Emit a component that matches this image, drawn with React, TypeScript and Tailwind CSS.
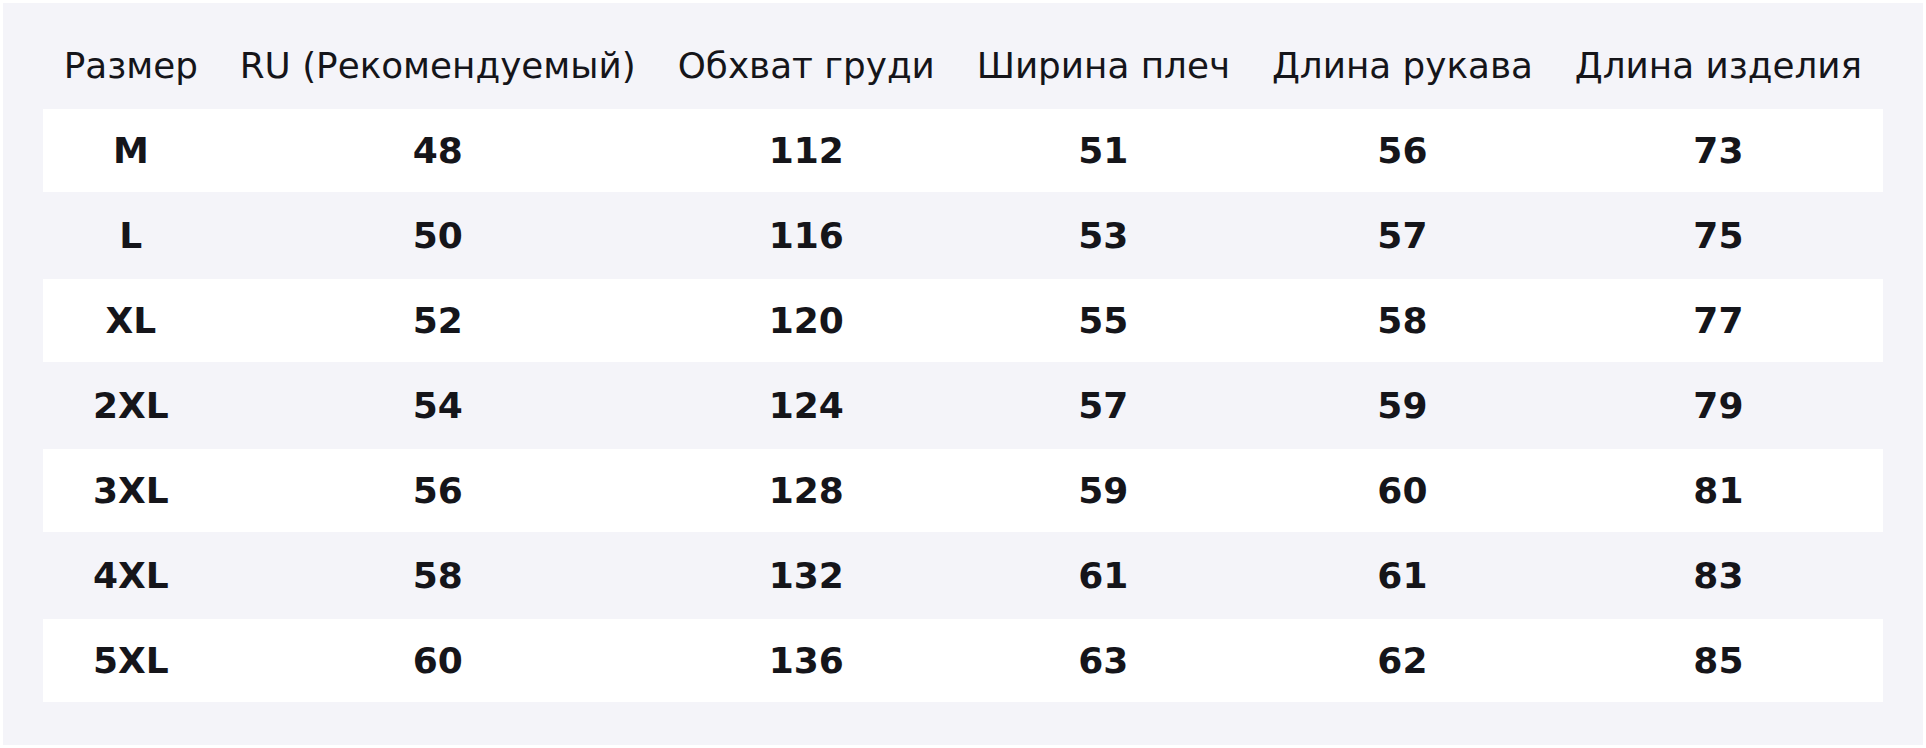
import React from "react";

const headers = [
  "Размер",
  "RU (Рекомендуемый)",
  "Обхват груди",
  "Ширина плеч",
  "Длина рукава",
  "Длина изделия",
];

const rows: string[][] = [
  ["M", "48", "112", "51", "56", "73"],
  ["L", "50", "116", "53", "57", "75"],
  ["XL", "52", "120", "55", "58", "77"],
  ["2XL", "54", "124", "57", "59", "79"],
  ["3XL", "56", "128", "59", "60", "81"],
  ["4XL", "58", "132", "61", "61", "83"],
  ["5XL", "60", "136", "63", "62", "85"],
];

export default function App() {
  return (
    <div className="bg-white p-[3px] w-[1926px] h-[748px] font-['DejaVu_Sans',sans-serif] text-[#15151a]">
      <div className="bg-[#f4f4f9] h-full px-10 pt-10">
        <table className="w-full border-separate border-spacing-x-0 border-spacing-y-[2px]">
          <thead>
            <tr>
              {headers.map((h) => (
                <th
                  key={h}
                  className="text-[35.75px] font-normal leading-[normal] px-[20.5px] pt-0 pb-[21px] align-top whitespace-nowrap text-center"
                >
                  {h}
                </th>
              ))}
            </tr>
          </thead>
          <tbody>
            {rows.map((r, i) => (
              <tr key={r[0]} className={i % 2 === 0 ? "bg-white" : ""}>
                {r.map((c, j) => (
                  <td
                    key={j}
                    className="h-[83px] p-0 text-[36px] font-bold leading-[normal] text-center align-middle"
                  >
                    {c}
                  </td>
                ))}
              </tr>
            ))}
          </tbody>
        </table>
      </div>
    </div>
  );
}
